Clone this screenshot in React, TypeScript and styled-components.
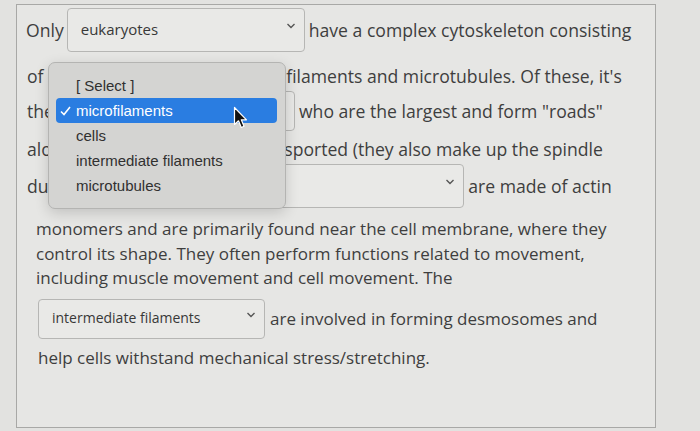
import React from 'react';
import styled, { createGlobalStyle } from 'styled-components';

const GlobalStyle = createGlobalStyle`
  html, body {
    margin: 0;
    padding: 0;
    background: #e2e2e0;
  }
  body {
    font-family: "Open Sans", "DejaVu Sans", sans-serif;
  }
`;

const Page = styled.div`
  width: 700px;
  height: 431px;
  box-sizing: border-box;
  padding: 4px 0 0 16px;
  overflow: hidden;
`;

const Panel = styled.div`
  position: relative;
  box-sizing: border-box;
  width: 640px;
  height: 424px;
  border: 1px solid #a8a8a6;
  background: #e6e6e4;
  padding: 2px 0 0 9px;
  color: #3e3e3e;
  font-size: 17px;
`;

// upper part of the question, where every line carries a dropdown
const Block = styled.div`
  font-size: 17.6px;
`;

const Line = styled.div<{ $h: number; $indent?: number }>`
  display: flex;
  align-items: center;
  height: ${p => p.$h}px;
  padding-left: ${p => p.$indent ?? 0}px;
  white-space: pre;
`;

const Para = styled.div<{ $top: number; $indent: number }>`
  margin-top: ${p => p.$top}px;
  padding-left: ${p => p.$indent}px;
  line-height: 24.5px;
  white-space: pre;
`;

const Dropdown = styled.div<{ $w: number; $h: number; $size?: number; $ml?: number; $mr?: number }>`
  flex-shrink: 0;
  position: relative;
  display: flex;
  align-items: center;
  box-sizing: border-box;
  width: ${p => p.$w}px;
  height: ${p => p.$h}px;
  margin: 0 ${p => p.$mr ?? 4}px 0 ${p => p.$ml ?? 3}px;
  padding: 0 0 2px 13px;
  border: 1px solid #b6b6b4;
  border-radius: 4px;
  background: #e9e9e7;
  font-size: ${p => p.$size ?? 15}px;
  color: #383838;
`;

const Chevron = styled.svg`
  position: absolute;
  right: 8px;
  top: 50%;
  margin-top: -8px;
`;

const Menu = styled.div`
  position: absolute;
  z-index: 10;
  left: 31px;
  top: 57px;
  width: 238px;
  box-sizing: border-box;
  padding: 10px 8px 10px 7px;
  border: 1px solid #b4b4b2;
  border-radius: 7px;
  background: #d4d4d2;
  box-shadow: 0 4px 14px rgba(0, 0, 0, 0.16);
  font-family: "Liberation Sans", Arial, sans-serif;
  font-size: 15px;
  color: #303030;
`;

const Option = styled.div<{ $active?: boolean }>`
  position: relative;
  display: flex;
  align-items: center;
  height: 25px;
  padding-left: 20px;
  border-radius: 4px;
  background: ${p => (p.$active ? '#2a7de1' : 'transparent')};
  color: ${p => (p.$active ? '#ffffff' : '#303030')};
`;

const Check = styled.svg`
  position: absolute;
  left: 4px;
  top: 8px;
`;

const Pointer = styled.svg`
  position: absolute;
  z-index: 11;
  left: 216px;
  top: 101px;
`;

const ChevronIcon = () => (
  <Chevron width="10" height="8" viewBox="0 0 10 8">
    <polyline points="1.5,2 5,5.5 8.5,2" fill="none" stroke="#555" strokeWidth="1.4" />
  </Chevron>
);

const Select = ({ w, h, size, ml, mr, value }: { w: number; h: number; size?: number; ml?: number; mr?: number; value?: string }) => (
  <Dropdown $w={w} $h={h} $size={size} $ml={ml} $mr={mr}>
    {value}
    <ChevronIcon />
  </Dropdown>
);

const options = ['[ Select ]', 'microfilaments', 'cells', 'intermediate filaments', 'microtubules'];

export default function App() {
  return (
    <>
      <GlobalStyle />
      <Page>
        <Panel>
          <Block>
            <Line $h={46}>
              Only
              <Select w={238} h={44} value="eukaryotes" />
              have a complex cytoskeleton consisting
            </Line>
            <Line $h={46} $indent={1}>
              of microfilaments intermediate filaments and microtubules. Of these, it's
            </Line>
            <Line $h={24} $indent={1}>
              the
              <Select w={238} h={40} value="microfilaments" />
              who are the largest and form "roads"
            </Line>
            <Line $h={52} $indent={1}>
              along which organelles are transported (they also make up the spindle
            </Line>
            <Line $h={22} $indent={1}>
              during cell division). The
              <Select w={237} h={44} />
              are made of actin
            </Line>
          </Block>
          <Para $top={20} $indent={10}>
            monomers and are primarily found near the cell membrane, where they{'\n'}
            control its shape. They often perform functions related to movement,{'\n'}
            including muscle movement and cell movement. The
          </Para>
          <Line $h={56} $indent={12}>
            <Select w={227} h={40} size={14} ml={0} mr={5} value="intermediate filaments" />
            are involved in forming desmosomes and
          </Line>
          <Line $h={22} $indent={12}>
            help cells withstand mechanical stress/stretching.
          </Line>

          <Menu>
            {options.map(o => (
              <Option key={o} $active={o === 'microfilaments'}>
                {o === 'microfilaments' && (
                  <Check width="11" height="10" viewBox="0 0 11 10">
                    <polyline points="1,5.5 4,8.5 10,1" fill="none" stroke="#fff" strokeWidth="1.6" />
                  </Check>
                )}
                {o}
              </Option>
            ))}
          </Menu>

          <Pointer width="16" height="24" viewBox="0 0 16 24">
            <path
              d="M1.5 1.5 L1.5 18.5 L5.5 14.8 L8.3 21.5 L11 20.3 L8.3 13.8 L13.5 13.8 Z"
              fill="#111"
              stroke="#fff"
              strokeWidth="1.2"
              strokeLinejoin="round"
            />
          </Pointer>
        </Panel>
      </Page>
    </>
  );
}
